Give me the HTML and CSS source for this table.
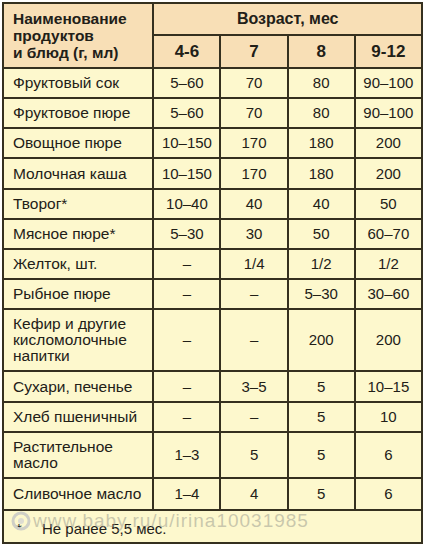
FILE: index.html
```html
<!DOCTYPE html>
<html lang="ru">
<head>
<meta charset="utf-8">
<title>Таблица прикорма</title>
<link rel="stylesheet" href="styles.css">
</head>
<body>
<div class="wrap">
<table class="feed">
  <colgroup>
    <col class="c-name"><col class="c-age"><col class="c-age"><col class="c-age"><col class="c-age">
  </colgroup>
  <thead>
    <tr class="h1">
      <th class="name-head" rowspan="2">Наименование<br>продуктов<br>и блюд (г, мл)</th>
      <th colspan="4">Возраст, мес</th>
    </tr>
    <tr class="h2">
      <th>4-6</th><th>7</th><th>8</th><th>9-12</th>
    </tr>
  </thead>
  <tbody>
    <tr><td>Фруктовый сок</td><td>5–60</td><td>70</td><td>80</td><td>90–100</td></tr>
    <tr><td>Фруктовое пюре</td><td>5–60</td><td>70</td><td>80</td><td>90–100</td></tr>
    <tr><td>Овощное пюре</td><td>10–150</td><td>170</td><td>180</td><td>200</td></tr>
    <tr class="r31"><td>Молочная каша</td><td>10–150</td><td>170</td><td>180</td><td>200</td></tr>
    <tr><td>Творог*</td><td>10–40</td><td>40</td><td>40</td><td>50</td></tr>
    <tr><td>Мясное пюре*</td><td>5–30</td><td>30</td><td>50</td><td>60–70</td></tr>
    <tr><td>Желток, шт.</td><td>–</td><td>1/4</td><td>1/2</td><td>1/2</td></tr>
    <tr><td>Рыбное пюре</td><td>–</td><td>–</td><td>5–30</td><td>30–60</td></tr>
    <tr class="r62"><td>Кефир и другие<br>кисломолочные<br>напитки</td><td>–</td><td>–</td><td>200</td><td>200</td></tr>
    <tr class="r31"><td>Сухари, печенье</td><td>–</td><td>3–5</td><td>5</td><td>10–15</td></tr>
    <tr><td>Хлеб пшеничный</td><td>–</td><td>–</td><td>5</td><td>10</td></tr>
    <tr class="r46"><td>Растительное<br>масло</td><td>1–3</td><td>5</td><td>5</td><td>6</td></tr>
    <tr class="r32"><td>Сливочное масло</td><td>1–4</td><td>4</td><td>5</td><td>6</td></tr>
    <tr class="note-row">
      <td class="note" colspan="5">
        <span class="star">*</span><span class="note-text">Не ранее 5,5 мес.</span>
        <span class="watermark">
          <svg class="wm-logo" width="22" height="22" viewBox="0 0 22 22" aria-hidden="true">
            <circle cx="11" cy="11" r="8" fill="none" stroke="#cfcfc6" stroke-width="3"/>
            <circle cx="11" cy="11" r="3" fill="#dedcd2"/>
          </svg>www.baby.ru/u/irina10031985</span>
      </td>
    </tr>
  </tbody>
</table>
</div>
</body>
</html>
```
FILE: styles.css
```css
html, body {
  margin: 0;
  padding: 0;
  background: #ffffff;
}
.wrap {
  padding: 2px 1px 0 2px;
}
.feed {
  border-collapse: collapse;
  table-layout: fixed;
  width: 421px;
  font-family: "Liberation Sans", Arial, sans-serif;
  color: #222018;
}
.c-name { width: 150px; }
.c-age { width: 67px; }
.feed th, .feed td {
  border: 2px solid #35301f;
  padding: 0;
  text-align: center;
  vertical-align: middle;
}
.feed thead th {
  background: #f8dfb6;
  font-weight: bold;
  font-size: 16px;
}
.feed .h1 th { height: 30px; }
.feed .h2 th { height: 31px; font-size: 17px; }
.feed .name-head {
  text-align: left;
  padding-left: 9px;
  font-size: 15.5px;
  line-height: 17px;
}
.feed tbody td {
  background: #fdf8cd;
  font-size: 15px;
  height: 28px;
  line-height: 16px;
}
.feed tbody td:first-child {
  text-align: left;
  padding-left: 9px;
  font-size: 15.5px;
}
.feed tbody tr.r31 td { height: 29px; }
.feed tbody tr.r32 td { height: 30px; }
.feed tbody tr.r46 td { height: 44px; }
.feed tbody tr.r62 td { height: 60px; }
.feed tbody td.note {
  position: relative;
  height: 27px;
  padding-top: 4px;
  text-align: left;
  padding-left: 12px;
  font-size: 15px;
}
.star {
  display: inline-block;
  width: 26px;
}
.watermark {
  position: absolute;
  left: 6px;
  top: -1px;
  display: flex;
  align-items: center;
  font-family: "Liberation Sans", Arial, sans-serif;
  font-size: 19px;
  letter-spacing: 1px;
  color: rgba(150, 150, 140, 0.5);
  white-space: nowrap;
}
.wm-logo {
  margin-right: 1px;
}
```
